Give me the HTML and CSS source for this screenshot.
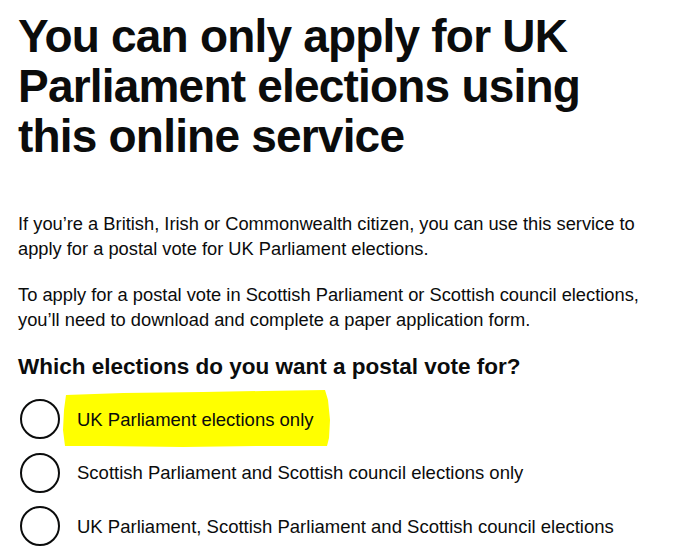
FILE: index.html
```html
<!DOCTYPE html>
<html lang="en">
<head>
<meta charset="utf-8">
<title>Postal vote</title>
<link rel="stylesheet" href="styles.css">
</head>
<body>
<main class="page">
  <h1 class="title">You can only apply for UK Parliament elections using this online service</h1>
  <p class="body">If you’re a British, Irish or Commonwealth citizen, you can use this service to apply for a postal vote for UK Parliament elections.</p>
  <p class="body">To apply for a postal vote in Scottish Parliament or Scottish council elections, you’ll need to download and complete a paper application form.</p>
  <fieldset class="fieldset">
    <legend class="legend">Which elections do you want a postal vote for?</legend>
    <div class="radios">
      <label class="radio">
        <span class="circle"></span>
        <span class="label">
          <svg class="marker" viewBox="0 0 268 57" preserveAspectRatio="none" aria-hidden="true"><path d="M3 5 L60 3 L140 2 L200 1 L262 0 L265 10 L267 30 L266 48 L264 56 L200 56 L120 57 L40 56 L2 56 L0 40 L1 20 Z" fill="#ffff00"/></svg>
          <span class="text">UK Parliament elections only</span>
        </span>
      </label>
      <label class="radio">
        <span class="circle"></span>
        <span class="label"><span class="text">Scottish Parliament and Scottish council elections only</span></span>
      </label>
      <label class="radio">
        <span class="circle"></span>
        <span class="label"><span class="text">UK Parliament, Scottish Parliament and Scottish council elections</span></span>
      </label>
    </div>
  </fieldset>
</main>
</body>
</html>
```
FILE: styles.css
```css
html, body {
  margin: 0;
  padding: 0;
  background: #ffffff;
}
body {
  font-family: "Liberation Sans", Arial, sans-serif;
  color: #0b0c0c;
}
.page {
  padding: 0 18px;
}
.title {
  margin: 0;
  padding-top: 11px;
  font-size: 46px;
  line-height: 50px;
  font-weight: 700;
  letter-spacing: -0.8px;
  width: 620px;
}
.body {
  margin: 50px 0 0;
  font-size: 18.3px;
  line-height: 25px;
}
.body + .body {
  margin-top: 21px;
}
.fieldset {
  margin: 20px 0 0;
  padding: 0;
  border: 0;
}
.legend {
  padding: 0;
  font-size: 22.5px;
  line-height: 30px;
  font-weight: 700;
}
.radios {
  display: flex;
  flex-direction: column;
  gap: 13.5px;
  padding-top: 17px;
}
.radio {
  display: flex;
  align-items: center;
  gap: 17px;
  padding-left: 2px;
}
.circle {
  width: 36px;
  height: 36px;
  border: 2px solid #0b0c0c;
  border-radius: 50%;
  flex: none;
}
.label {
  position: relative;
  font-size: 18.5px;
  line-height: 25px;
}
.text {
  position: relative;
}
.marker {
  position: absolute;
  left: -14px;
  top: -17px;
  width: 268px;
  height: 57px;
}
```
